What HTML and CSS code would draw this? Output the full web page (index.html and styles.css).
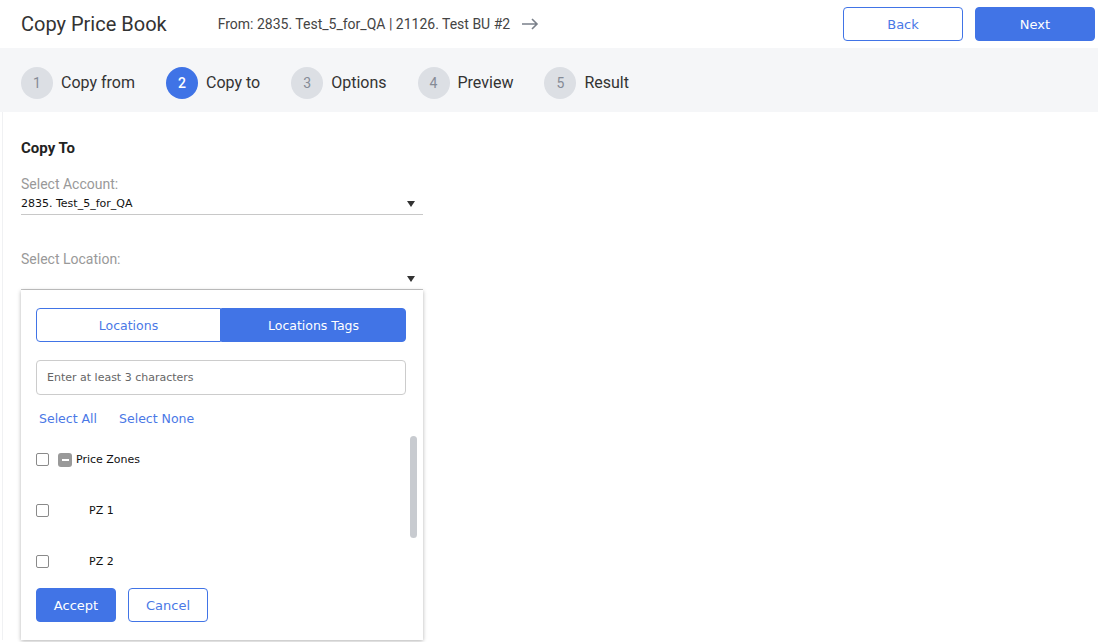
FILE: index.html
```html
<!DOCTYPE html>
<html lang="en">
<head>
    <meta charset="UTF-8">
    <meta name="viewport" content="width=device-width, initial-scale=1.0">
    <title>Copy Price Book</title>
    <link rel="stylesheet" href="styles.css">
</head>
<body>
    <div class="header">
        <h1 class="title">Copy Price Book</h1>
        <span class="from">From: 2835. Test_5_for_QA | 21126. Test BU #2</span>
        <svg class="arrow" width="17" height="12" viewBox="0 0 17 12"><path d="M0 6h15M10 1l5 5-5 5" fill="none" stroke="#7a808a" stroke-width="1.6"/></svg>
        <div class="header-actions">
            <button class="btn btn-outline btn-wide">Back</button>
            <button class="btn btn-primary btn-wide">Next</button>
        </div>
    </div>

    <div class="steps">
        <div class="step"><span class="step-num">1</span>Copy from</div>
        <div class="step active"><span class="step-num">2</span>Copy to</div>
        <div class="step"><span class="step-num">3</span>Options</div>
        <div class="step"><span class="step-num">4</span>Preview</div>
        <div class="step"><span class="step-num">5</span>Result</div>
    </div>

    <div class="content">
        <h2 class="section-title">Copy To</h2>

        <div class="field">
            <label class="field-label">Select Account:</label>
            <div class="select">
                <span class="select-value">2835. Test_5_for_QA</span>
                <span class="caret"></span>
            </div>
        </div>

        <div class="field field-location">
            <label class="field-label">Select Location:</label>
            <div class="select">
                <span class="select-value"></span>
                <span class="caret"></span>
            </div>
        </div>

        <div class="dropdown">
            <div class="tabs">
                <button class="tab">Locations</button>
                <button class="tab tab-active">Locations Tags</button>
            </div>
            <input type="text" class="search" placeholder="Enter at least 3 characters">
            <div class="links">
                <a class="link">Select All</a>
                <a class="link">Select None</a>
            </div>
            <div class="list-wrap">
                <ul class="tree">
                    <li class="tree-row">
                        <span class="checkbox"></span>
                        <span class="toggle"></span>
                        <span class="tree-text">Price Zones</span>
                    </li>
                    <li class="tree-row child">
                        <span class="checkbox"></span>
                        <span class="tree-text">PZ 1</span>
                    </li>
                    <li class="tree-row child">
                        <span class="checkbox"></span>
                        <span class="tree-text">PZ 2</span>
                    </li>
                </ul>
                <div class="scrollbar"></div>
            </div>
            <div class="dropdown-actions">
                <button class="btn btn-primary">Accept</button>
                <button class="btn btn-outline">Cancel</button>
            </div>
        </div>
    </div>
</body>
</html>
```

FILE: styles.css
```css
body {
    margin: 0;
    font-family: Roboto, "Liberation Sans", sans-serif;
    background-color: #fff;
    color: #333;
    width: 1098px;
    height: 642px;
    overflow: hidden;
}
.header {
    height: 48px;
    display: flex;
    align-items: center;
    padding: 0 3px 0 21px;
}
.title {
    margin: 0;
    font-size: 20px;
    font-weight: 400;
    color: #333;
}
.from {
    margin-left: 51px;
    font-size: 14px;
    color: #444;
}
.arrow {
    margin-left: 12px;
}
.header-actions {
    margin-left: auto;
    display: flex;
    gap: 12px;
}
.btn {
    font-family: Tahoma, "DejaVu Sans", sans-serif;
    font-size: 13px;
    height: 34px;
    width: 80px;
    border-radius: 4px;
    cursor: pointer;
    box-sizing: border-box;
}
.btn-wide {
    width: 120px;
}
.btn-primary {
    background-color: #4174e6;
    border: 1px solid #4174e6;
    color: #fff;
}
.btn-outline {
    background-color: #fff;
    border: 1px solid #4174e6;
    color: #4a78e6;
}
.steps {
    height: 64px;
    box-sizing: border-box;
    padding-top: 5px;
    background-color: #f5f6f8;
    display: flex;
    align-items: center;
    padding-left: 21px;
    gap: 31px;
}
.step {
    display: flex;
    align-items: center;
    font-size: 16px;
    color: #333;
}
.step-num {
    width: 32px;
    height: 32px;
    border-radius: 50%;
    background-color: #dcdfe4;
    color: #858b96;
    font-size: 14px;
    display: flex;
    align-items: center;
    justify-content: center;
    margin-right: 8px;
}
.step.active .step-num {
    background-color: #3f73e6;
    color: #fff;
    font-weight: 500;
}
.content {
    padding: 27px 0 0 18px;
    border-left: 1px solid #f0f1f3;
    margin-left: 2px;
}
.section-title {
    margin: 0 0 18px;
    font-size: 15px;
    font-weight: 700;
    color: #222;
}
.field {
    width: 402px;
}
.field-label {
    display: block;
    font-size: 14px;
    color: #999;
    line-height: 18px;
}
.select {
    display: flex;
    align-items: center;
    justify-content: space-between;
    border-bottom: 1px solid #c8c8c8;
    height: 21px;
}
.select-value {
    font-family: Tahoma, "DejaVu Sans", sans-serif;
    font-size: 11px;
    color: #111;
}
.caret {
    width: 0;
    height: 0;
    border-left: 4px solid transparent;
    border-right: 4px solid transparent;
    border-top: 6px solid #333;
    margin-right: 8px;
}
.field-location {
    margin-top: 35px;
}
.dropdown {
    width: 372px;
    padding: 18px 15px 16px;
    box-shadow: 0 1px 4px rgba(0, 0, 0, 0.3);
    background-color: #fff;
    height: 316px;
}
.tabs {
    display: flex;
    width: 370px;
}
.tab {
    flex: 1;
    height: 34px;
    font-family: Tahoma, "DejaVu Sans", sans-serif;
    font-size: 12.5px;
    background-color: #fff;
    border: 1px solid #4174e6;
    color: #4a78e6;
    cursor: pointer;
}
.tab:first-child {
    border-radius: 4px 0 0 4px;
}
.tab-active {
    background-color: #4174e6;
    color: #fff;
    border-radius: 0 4px 4px 0;
}
.search {
    display: block;
    margin-top: 18px;
    width: 370px;
    height: 35px;
    box-sizing: border-box;
    border: 1px solid #ccc;
    border-radius: 4px;
    padding: 0 10px;
    font-family: Tahoma, "DejaVu Sans", sans-serif;
    font-size: 11px;
}
.search::placeholder {
    color: #666;
}
.links {
    margin-top: 16px;
    display: flex;
    gap: 22px;
    padding-left: 3px;
}
.link {
    font-family: Tahoma, "DejaVu Sans", sans-serif;
    font-size: 12.5px;
    color: #4a78e6;
    cursor: pointer;
}
.list-wrap {
    position: relative;
    height: 154px;
    margin-top: 8px;
}
.tree {
    list-style: none;
    margin: 0;
    padding: 0;
}
.tree-row {
    display: flex;
    align-items: center;
    height: 51px;
}
.checkbox {
    width: 11px;
    height: 11px;
    border: 1.5px solid #8a8a8a;
    border-radius: 2px;
}
.toggle {
    position: relative;
    width: 14px;
    height: 14px;
    background-color: #999;
    border-radius: 3px;
    margin-left: 9px;
    margin-right: 4px;
}
.toggle::after {
    content: "";
    position: absolute;
    left: 4px;
    top: 6px;
    width: 7px;
    height: 2px;
    background-color: #fff;
}
.tree-text {
    font-family: Tahoma, "DejaVu Sans", sans-serif;
    font-size: 11px;
    color: #111;
}
.child .tree-text {
    margin-left: 40px;
}
.scrollbar {
    position: absolute;
    right: -9px;
    top: 2px;
    width: 7px;
    height: 102px;
    border-radius: 4px;
    background-color: #c8cbd0;
}
.dropdown-actions {
    display: flex;
    gap: 12px;
}
```
